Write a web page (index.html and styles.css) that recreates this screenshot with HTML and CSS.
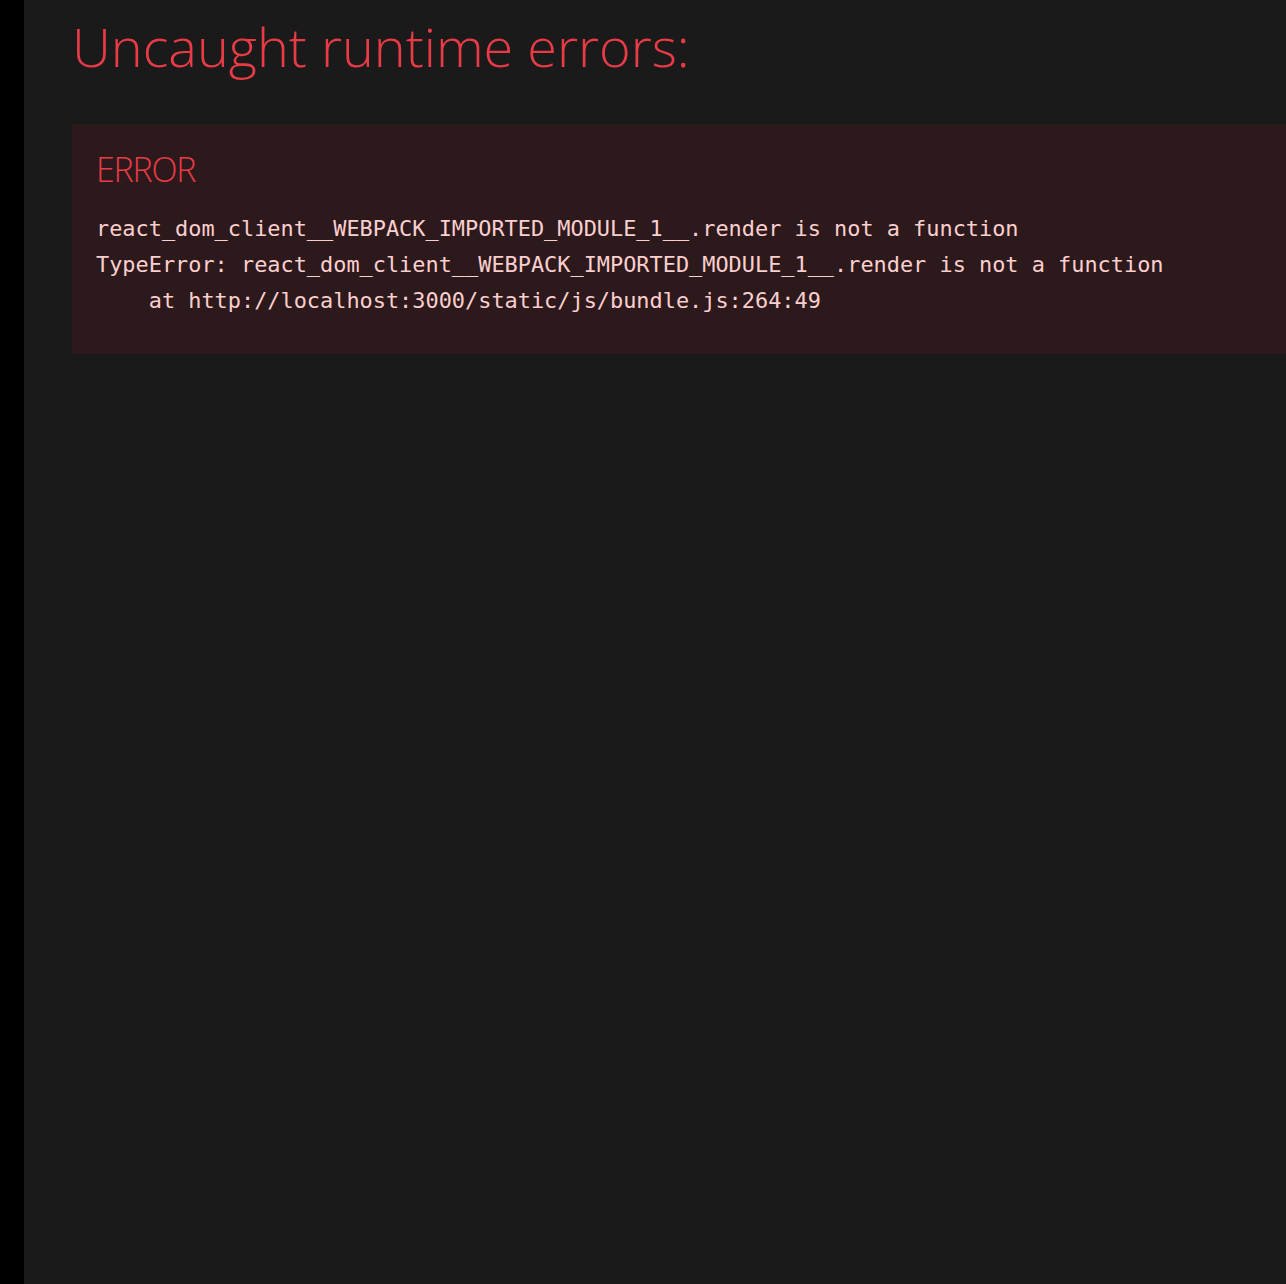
FILE: index.html
```html
<!DOCTYPE html>
<html>
<head>
<meta charset="utf-8">
<link rel="stylesheet" href="styles.css">
</head>
<body>
<div class="overlay">
  <div class="header">Uncaught runtime errors:</div>
  <div class="error">
    <div class="error-title">ERROR</div>
    <div class="error-msg">react_dom_client__WEBPACK_IMPORTED_MODULE_1__.render is not a function
TypeError: react_dom_client__WEBPACK_IMPORTED_MODULE_1__.render is not a function
    at http://localhost:3000/static/js/bundle.js:264:49</div>
  </div>
</div>
</body>
</html>
```
FILE: styles.css
```css
html, body {
  margin: 0;
  padding: 0;
  background: #000;
  overflow: hidden;
}
.overlay {
  margin-left: 24px;
  min-height: 1284px;
  background: #1a1a1a;
  padding: 14px 0 0 48px;
  box-sizing: border-box;
}
.header {
  font-family: "Open Sans", "Noto Sans", sans-serif;
  font-weight: 350;
  font-size: 54px;
  line-height: 64.8px;
  letter-spacing: 0px;
  color: #e83b46;
  margin-bottom: 45px;
  white-space: nowrap;
}
.error {
  background: #2c191b;
  padding: 24px 24px 35px 24px;
  margin-right: -40px;
}
.error-title {
  font-family: "Open Sans", "Noto Sans", sans-serif;
  font-weight: 350;
  font-size: 34px;
  line-height: 43px;
  letter-spacing: -1.2px;
  color: #e83b46;
  margin-bottom: 20px;
}
.error-msg {
  font-family: "DejaVu Sans Mono", monospace;
  font-size: 21.9px;
  line-height: 36px;
  color: #fccfcf;
  white-space: pre;
}
```
